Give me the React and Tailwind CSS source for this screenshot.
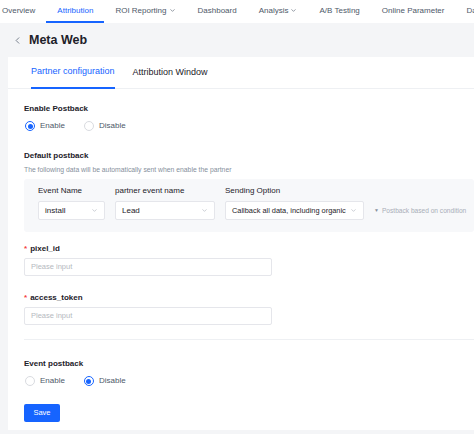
import { ChevronDown, ChevronLeft } from "lucide-react";

const navItems = [
  { label: "Overview" },
  { label: "Attribution", active: true },
  { label: "ROI Reporting", caret: true },
  { label: "Dashboard" },
  { label: "Analysis", caret: true },
  { label: "A/B Testing" },
  { label: "Online Parameter" },
  { label: "Data" },
];

function Radio({ checked, label }) {
  return (
    <label className="flex items-center gap-[5px] h-[12px]">
      <span
        className={
          "w-[10px] h-[10px] rounded-full border flex items-center justify-center bg-white " +
          (checked ? "border-[#1664ff]" : "border-[#d9dbe0]")
        }
      >
        {checked && <span className="w-[5px] h-[5px] rounded-full bg-[#1664ff]" />}
      </span>
      <span className="text-[8px] text-[#4e5969]">{label}</span>
    </label>
  );
}

function Select({ value, width, small }) {
  return (
    <div
      className="h-[19px] bg-white border border-[#e5e6eb] rounded-[2px] flex items-center justify-between pl-[6px] pr-[6px]"
      style={{ width }}
    >
      <span className={(small ? "text-[7.4px]" : "text-[8px]") + " text-[#1d2129] whitespace-nowrap"}>{value}</span>
      <ChevronDown className="w-[7px] h-[7px] shrink-0 text-[#a9aeb8]" strokeWidth={2} />
    </div>
  );
}

function Field({ label }) {
  return (
    <div>
      <div className="h-[12px] flex items-center text-[8px] font-bold text-[#1d2129]">
        <span className="text-[#f53f3f] mr-[3px]">*</span>
        {label}
      </div>
      <div className="mt-[3px] w-[248px] h-[18px] border border-[#e5e6eb] rounded-[2px] bg-white flex items-center px-[6px]">
        <span className="text-[7.5px] text-[#b5b9c0]">Please input</span>
      </div>
    </div>
  );
}

export default function App() {
  return (
    <div
      className="w-[474px] h-[434px] overflow-hidden bg-[#f4f5f7] text-[#1d2129]"
      style={{ fontFamily: '"Liberation Sans", Arial, sans-serif' }}
    >
      {/* top nav */}
      <nav className="h-[23px] bg-white flex items-stretch ml-[-9px] whitespace-nowrap overflow-hidden">
        {navItems.map((item) => (
          <div
            key={item.label}
            className={
              "px-[11px] flex items-center gap-[2px] text-[8px] border-b-2 shrink-0 " +
              (item.active ? "text-[#1664ff] border-[#1664ff]" : "text-[#4e5969] border-transparent")
            }
          >
            {item.label}
            {item.caret && <ChevronDown className="w-[7px] h-[7px]" strokeWidth={2} />}
          </div>
        ))}
      </nav>

      {/* page header */}
      <div className="h-[34px] flex items-center pl-[12px]">
        <ChevronLeft className="w-[11px] h-[11px] text-[#4e5969]" strokeWidth={1.6} />
        <h1 className="ml-[6px] text-[12.5px] font-bold text-[#1d2129]">Meta Web</h1>
      </div>

      {/* card */}
      <div className="ml-[8px] bg-white h-[373px]">
        <div className="flex border-b border-[#eef0f3] pl-[23px] h-[32px] items-stretch">
          <div className="flex items-center text-[9px] text-[#1664ff] border-b-2 border-[#1664ff] -mb-px">
            Partner configuration
          </div>
          <div className="ml-[18px] flex items-center text-[9px] text-[#1d2129]">
            Attribution Window
          </div>
        </div>

        <div className="pl-[16px]">
          <div className="mt-[14px] h-[12px] flex items-center text-[8px] font-bold">Enable Postback</div>
          <div className="mt-[5px] flex gap-[19px] pl-[1px]">
            <Radio checked label="Enable" />
            <Radio label="Disable" />
          </div>

          <div className="mt-[18px] h-[12px] flex items-center text-[8px] font-bold">Default postback</div>
          <div className="mt-[3px] h-[10px] flex items-center text-[6.8px] text-[#86909c] whitespace-nowrap">
            The following data will be automatically sent when enable the partner
          </div>

          <div className="mt-[4px] bg-[#f7f8fa] rounded-[3px] pl-[14px] pt-[6px] pb-[12px] flex gap-[10px] items-end whitespace-nowrap">
            <div>
              <div className="h-[12px] flex items-center text-[8px] text-[#1d2129]">Event Name</div>
              <div className="mt-[4px]"><Select value="install" width={67} /></div>
            </div>
            <div>
              <div className="h-[12px] flex items-center text-[8px] text-[#1d2129]">partner event name</div>
              <div className="mt-[4px]"><Select value="Lead" width={100} /></div>
            </div>
            <div>
              <div className="h-[12px] flex items-center text-[8px] text-[#1d2129]">Sending Option</div>
              <div className="mt-[4px]"><Select value="Callback all data, including organic" width={139} small /></div>
            </div>
            <div className="h-[19px] flex items-center gap-[3px] text-[6.6px] text-[#a9aeb8]">
              <span className="text-[5px] text-[#86909c]">▼</span>
              Postback based on condition
            </div>
          </div>

          <div className="mt-[11px]"><Field label="pixel_id" /></div>
          <div className="mt-[16px]"><Field label="access_token" /></div>

          <div className="mt-[14px] border-t border-[#eef0f3]" />

          <div className="mt-[18px] h-[12px] flex items-center text-[8px] font-bold">Event postback</div>
          <div className="mt-[5px] flex gap-[19px] pl-[1px]">
            <Radio label="Enable" />
            <Radio checked label="Disable" />
          </div>

          <button className="mt-[17px] w-[36px] h-[18px] bg-[#1664ff] text-white text-[7.5px] rounded-[2px]">
            Save
          </button>
        </div>
      </div>
    </div>
  );
}
